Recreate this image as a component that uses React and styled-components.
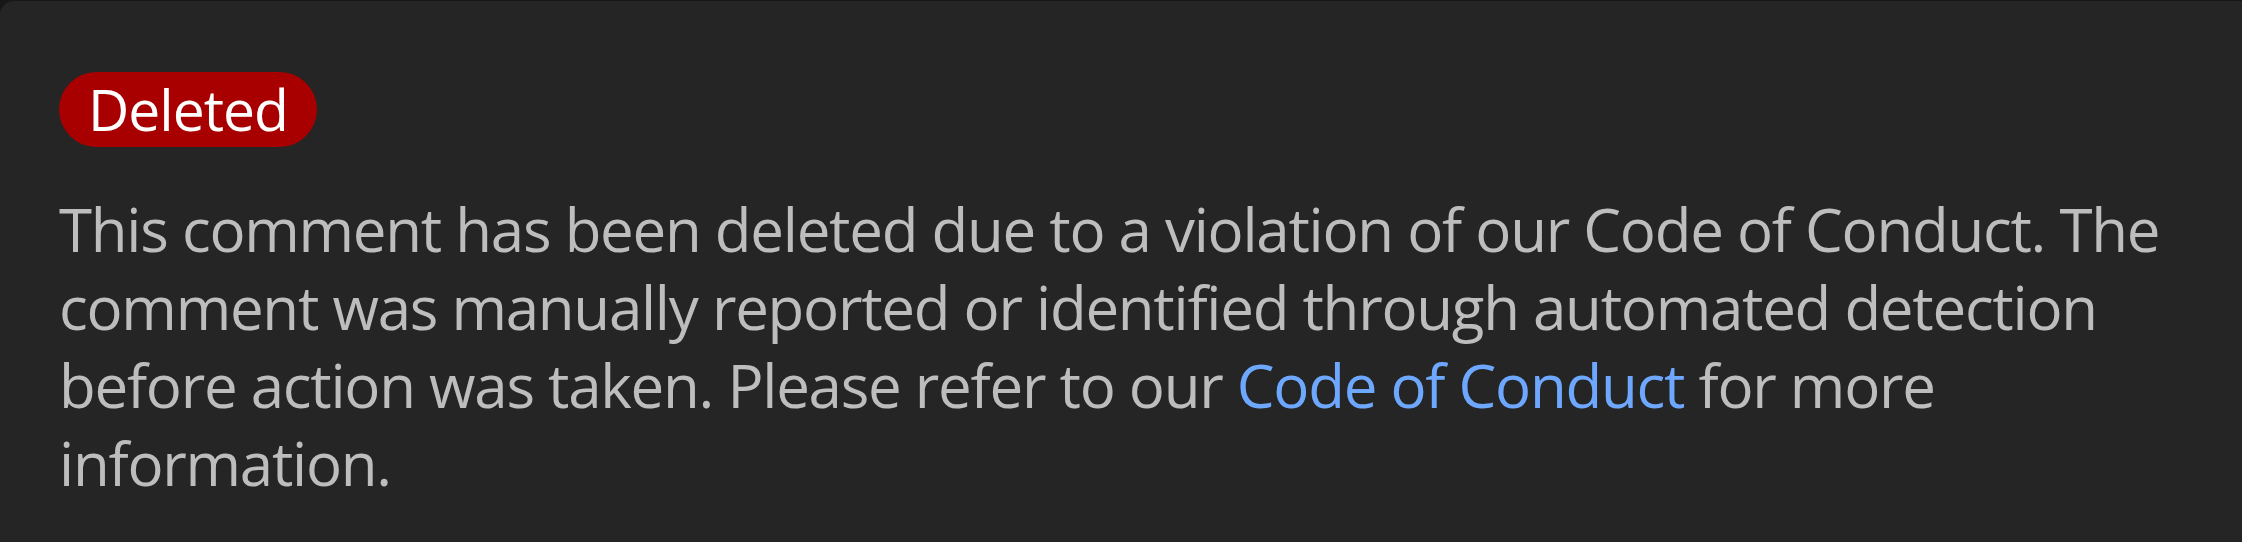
import React from "react";
import styled, { createGlobalStyle } from "styled-components";

const GlobalStyle = createGlobalStyle`
  html, body {
    margin: 0;
    padding: 0;
    background: #171717;
    overflow: hidden;
  }
  body {
    font-family: "Open Sans", "Noto Sans", sans-serif;
  }
`;

const Card = styled.div`
  margin-top: 1px;
  min-height: 541px;
  box-sizing: border-box;
  background: #252525;
  border-top-left-radius: 14px;
  padding: 71px 59px 0 59px;
`;

const Badge = styled.span`
  display: inline-block;
  height: 75px;
  line-height: 75px;
  padding: 0 29px;
  border-radius: 38px;
  background: #a80000;
  color: #ffffff;
  font-size: 57px;
  letter-spacing: -1px;
`;

const Message = styled.p`
  margin: 43px 0 0 0;
  font-size: 60px;
  line-height: 78px;
  letter-spacing: -1.25px;
  color: #bdbdbd;
`;

const Link = styled.a`
  color: #6ea8fe;
  text-decoration: none;
`;

export default function App() {
  return (
    <>
      <GlobalStyle />
      <Card>
        <Badge>Deleted</Badge>
        <Message>
          This comment has been deleted due to a violation of our Code of Conduct. The comment was
          manually reported or identified through automated detection before action was taken.
          Please refer to our <Link href="#">Code of Conduct</Link> for more information.
        </Message>
      </Card>
    </>
  );
}
